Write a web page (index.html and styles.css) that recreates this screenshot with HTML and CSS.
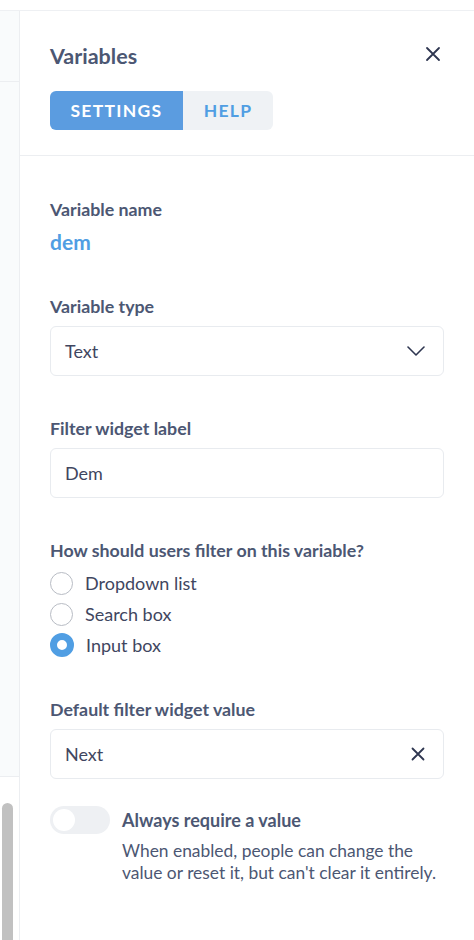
FILE: index.html
```html
<!DOCTYPE html>
<html lang="en">
<head>
  <meta charset="UTF-8" />
  <meta name="viewport" content="width=device-width, initial-scale=1.0"/>
  <title>Variables</title>
  <link rel="stylesheet" href="styles.css">
</head>
<body>
  <div class="topBar"></div>

  <div class="main">
    <!-- left edge of the query editor -->
    <div class="sideStrip">
      <div class="stripTop"></div>
      <div class="stripMid"></div>
      <div class="stripBottom">
        <div class="scrollThumb"></div>
      </div>
    </div>

    <div class="panel">
      <div class="panelHeader">
        <div class="titleRow">
          <h2>Variables</h2>
          <svg class="closeIcon" width="16" height="16" viewBox="0 0 16 16">
            <path d="M2 2 L14 14 M14 2 L2 14" stroke="#2e3650" stroke-width="1.8" stroke-linecap="round" fill="none"/>
          </svg>
        </div>
        <div class="tabs">
          <button class="tab active">SETTINGS</button>
          <button class="tab">HELP</button>
        </div>
      </div>

      <div class="panelBody">
        <div class="field">
          <div class="label">Variable name</div>
          <div class="varName">dem</div>
        </div>

        <div class="field">
          <div class="label">Variable type</div>
          <div class="box">
            <span>Text</span>
            <svg width="18" height="10" viewBox="0 0 18 10">
              <path d="M1 1 L9 9 L17 1" stroke="#2e3650" stroke-width="1.6" stroke-linecap="round" stroke-linejoin="round" fill="none"/>
            </svg>
          </div>
        </div>

        <div class="field">
          <div class="label">Filter widget label</div>
          <div class="box"><span>Dem</span></div>
        </div>

        <div class="field">
          <div class="label">How should users filter on this variable?</div>
          <div class="radios">
            <div class="radio"><span class="dot"></span>Dropdown list</div>
            <div class="radio"><span class="dot"></span>Search box</div>
            <div class="radio"><span class="dot on"></span>Input box</div>
          </div>
        </div>

        <div class="field">
          <div class="label">Default filter widget value</div>
          <div class="box">
            <span>Next</span>
            <svg width="14" height="14" viewBox="0 0 14 14">
              <path d="M1.5 1.5 L12.5 12.5 M12.5 1.5 L1.5 12.5" stroke="#2e3650" stroke-width="1.8" stroke-linecap="round" fill="none"/>
            </svg>
          </div>
        </div>

        <div class="requireRow">
          <div class="toggle"><span class="knob"></span></div>
          <div>
            <div class="requireTitle">Always require a value</div>
            <p class="requireText">When enabled, people can change the value or reset it, but can't clear it entirely.</p>
          </div>
        </div>
      </div>
    </div>
  </div>
</body>
</html>
```

FILE: styles.css
```css
body {
  margin: 0;
  font-family: Lato, "Open Sans", sans-serif;
  color: #4c5773;
  background: #fff;
  height: 940px;
  display: flex;
  flex-direction: column;
  overflow: hidden;
}
.topBar {
  height: 10px;
  border-bottom: 1px solid #eef0f3;
}
.main {
  flex: 1;
  display: flex;
}

/* left strip */
.sideStrip {
  width: 19px;
  border-right: 1px solid #eceef1;
  display: flex;
  flex-direction: column;
}
.stripTop {
  height: 70px;
  background: #f9fbfc;
  border-bottom: 1px solid #eceef1;
}
.stripMid {
  height: 694px;
  background: #f9fbfc;
  border-bottom: 1px solid #eceef1;
}
.stripBottom {
  flex: 1;
  padding: 26px 0 0 2px;
  display: flex;
}
.scrollThumb {
  width: 11px;
  background: #c1c1c1;
  border-radius: 6px 6px 0 0;
}

/* panel */
.panel {
  flex: 1;
}
.panelHeader {
  padding: 33px 30px 25px 30px;
  border-bottom: 1px solid #eceef1;
}
.titleRow {
  display: flex;
  justify-content: space-between;
  align-items: center;
}
.titleRow h2 {
  margin: 0;
  font-size: 21.5px;
  line-height: 24px;
  font-weight: 700;
  color: #4c5773;
}
.closeIcon {
  margin-right: 3px;
  margin-top: -4px;
}
.tabs {
  display: flex;
  margin-top: 23px;
  width: 223px;
  border-radius: 6px;
  overflow: hidden;
}
.tab {
  border: none;
  height: 39px;
  font-family: inherit;
  font-size: 17.5px;
  font-weight: 700;
  letter-spacing: 1.3px;
  color: #509ee3;
  background: #eff2f5;
  padding: 0;
  flex: 1;
}
.tab.active {
  flex: none;
  width: 133px;
  background: #5b9ce0;
  color: #fff;
}

.panelBody {
  padding: 43px 30px 0 30px;
}
.field {
  margin-bottom: 42px;
}
.label {
  font-size: 17.8px;
  line-height: 20px;
  font-weight: 700;
  color: #4c5773;
}
.varName {
  margin-top: 11px;
  font-size: 21px;
  line-height: 24px;
  font-weight: 700;
  color: #509ee3;
}
.box {
  margin-top: 10px;
  height: 48px;
  border: 1px solid #e8ebef;
  border-radius: 6px;
  display: flex;
  align-items: center;
  justify-content: space-between;
  padding: 0 16px 0 14px;
  font-size: 18px;
  color: #3f4660;
}
.box svg {
  margin-right: 2px;
}

.radios {
  margin-top: 11px;
  display: flex;
  flex-direction: column;
  gap: 7px;
}
.radio {
  display: flex;
  align-items: center;
  height: 24px;
  font-size: 18px;
  color: #3f4660;
}
.dot {
  width: 21px;
  height: 21px;
  border: 1.5px solid #b8bcc4;
  border-radius: 50%;
  margin-right: 12px;
  box-sizing: content-box;
}
.dot.on {
  width: 10px;
  height: 10px;
  border: 7px solid #509ee3;
  background: #fff;
}

.requireRow {
  display: flex;
  gap: 12px;
  margin: -15px -12px 0 0;
}
.toggle {
  width: 60px;
  height: 28px;
  border-radius: 14px;
  background: #eef0f3;
  flex: none;
  padding: 3px;
  box-sizing: border-box;
}
.knob {
  display: block;
  width: 22px;
  height: 22px;
  border-radius: 50%;
  background: #fff;
}
.requireTitle {
  font-size: 18px;
  line-height: 28px;
  font-weight: 700;
  color: #4c5773;
}
.requireText {
  margin: 6px 0 0 0;
  font-size: 17.4px;
  line-height: 22px;
  color: #4c5773;
}
```
